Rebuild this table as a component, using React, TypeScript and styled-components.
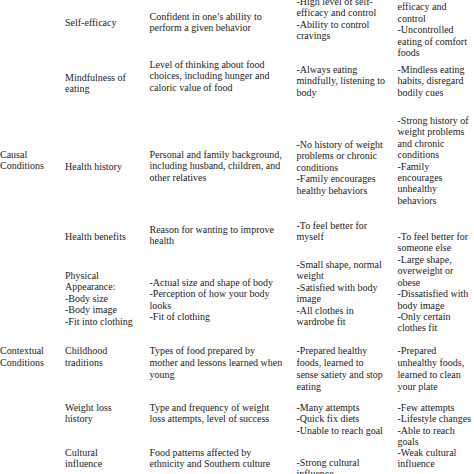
import * as React from 'react';
import styled, { createGlobalStyle } from 'styled-components';

interface CellData {
  top: number;
  lines: string[];
}

interface RowData {
  height: number;
  lineHeight?: number;
  cells: CellData[];
}

const GlobalStyle = createGlobalStyle`
  html, body {
    margin: 0;
    padding: 0;
    background: #ffffff;
  }
  body {
    width: 474px;
    height: 474px;
    overflow: hidden;
  }
`;

const Table = styled.div`
  display: flex;
  flex-direction: column;
  margin-top: -12px;
  font-family: 'Liberation Serif', 'Times New Roman', serif;
  font-size: 10px;
  color: #1c1c1c;
`;

const Row = styled.div<{ $h: number; $lh: number }>`
  display: grid;
  grid-template-columns: 65px 84.5px 147px 101px 1fr;
  height: ${(p) => p.$h}px;
  line-height: ${(p) => p.$lh}px;
`;

const Cell = styled.div<{ $top: number }>`
  padding-top: ${(p) => p.$top}px;
  white-space: nowrap;
`;

const Line = styled.div`
  display: block;
`;

const empty: CellData = { top: 0, lines: [] };

const rows: RowData[] = [
  {
    height: 70,
    cells: [
      empty,
      { top: 29, lines: ['Self-efficacy'] },
      { top: 23, lines: ['Confident in one\u2019s ability to', 'perform a given behavior'] },
      { top: 8, lines: ['-High level of self-', 'efficacy and control', '-Ability to control', 'cravings'] },
      { top: 2, lines: ['-Low self-', 'efficacy and', 'control', '-Uncontrolled', 'eating of comfort', 'foods'] },
    ],
  },
  {
    height: 54,
    cells: [
      empty,
      { top: 13.5, lines: ['Mindfulness of', 'eating'] },
      { top: 1, lines: ['Level of thinking about food', 'choices, including hunger and', 'caloric value of food'] },
      { top: 6, lines: ['-Always eating', 'mindfully, listening to', 'body'] },
      { top: 6, lines: ['-Mindless eating', 'habits, disregard', 'bodily cues'] },
    ],
  },
  {
    height: 100,
    cells: [
      { top: 37, lines: ['Causal', 'Conditions'] },
      { top: 49, lines: ['Health history'] },
      { top: 37, lines: ['Personal and family background,', 'including husband, children, and', 'other relatives'] },
      { top: 27, lines: ['-No history of weight', 'problems or chronic', 'conditions', '-Family encourages', 'healthy behaviors'] },
      {
        top: 3,
        lines: ['-Strong history of', 'weight problems', 'and chronic', 'conditions', '-Family', 'encourages', 'unhealthy', 'behaviors'],
      },
    ],
  },
  {
    height: 40,
    cells: [
      empty,
      { top: 19, lines: ['Health benefits'] },
      { top: 12, lines: ['Reason for wanting to improve', 'health'] },
      { top: 8, lines: ['-To feel better for', 'myself'] },
      { top: 19, lines: ['-To feel better for', 'someone else'] },
    ],
  },
  {
    height: 88,
    cells: [
      empty,
      { top: 18, lines: ['Physical', 'Appearance:', '-Body size', '-Body image', '-Fit into clothing'] },
      { top: 25, lines: ['-Actual size and shape of body', '-Perception of how your body', 'looks', '-Fit of clothing'] },
      { top: 7, lines: ['-Small shape, normal', 'weight', '-Satisfied with body', 'image', '-All clothes in', 'wardrobe fit'] },
      {
        top: 2,
        lines: ['-Large shape,', 'overweight or', 'obese', '-Dissatisfied with', 'body image', '-Only certain', 'clothes fit'],
      },
    ],
  },
  {
    height: 56,
    lineHeight: 12.3,
    cells: [
      { top: 4.5, lines: ['Contextual', 'Conditions'] },
      { top: 4.5, lines: ['Childhood', 'traditions'] },
      { top: 4.5, lines: ['Types of food prepared by', 'mother and lessons learned when', 'young'] },
      { top: 4.5, lines: ['-Prepared healthy', 'foods, learned to', 'sense satiety and stop', 'eating'] },
      { top: 4.5, lines: ['-Prepared', 'unhealthy foods,', 'learned to clean', 'your plate'] },
    ],
  },
  {
    height: 50,
    cells: [
      empty,
      { top: 6, lines: ['Weight loss', 'history'] },
      { top: 6, lines: ['Type and frequency of weight', 'loss attempts, level of success'] },
      { top: 6, lines: ['-Many attempts', '-Quick fix diets', '-Unable to reach goal'] },
      { top: 6, lines: ['-Few attempts', '-Lifestyle changes', '-Able to reach', 'goals'] },
    ],
  },
  {
    height: 40,
    cells: [
      empty,
      { top: 1, lines: ['Cultural', 'influence'] },
      { top: 1, lines: ['Food patterns affected by', 'ethnicity and Southern culture'] },
      { top: 11, lines: ['-Strong cultural', 'influence'] },
      { top: 1, lines: ['-Weak cultural', 'influence'] },
    ],
  },
];

export default function App() {
  return (
    <>
      <GlobalStyle />
      <Table>
        {rows.map((row, ri) => (
          <Row key={ri} $h={row.height} $lh={row.lineHeight ?? 11.4}>
            {row.cells.map((cell, ci) => (
              <Cell key={ci} $top={cell.top}>
                {cell.lines.map((line, li) => (
                  <Line key={li}>{line}</Line>
                ))}
              </Cell>
            ))}
          </Row>
        ))}
      </Table>
    </>
  );
}
